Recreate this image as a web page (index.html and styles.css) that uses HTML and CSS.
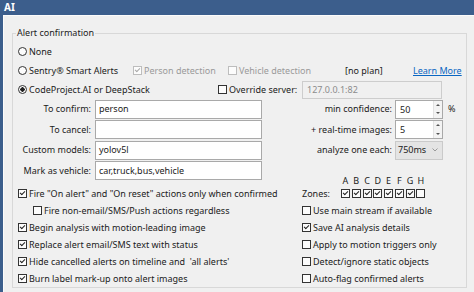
FILE: index.html
```html
<!DOCTYPE html>
<html lang="en">
<head>
    <meta charset="UTF-8">
    <meta name="viewport" content="width=device-width, initial-scale=1.0">
    <title>AI</title>
    <link rel="stylesheet" href="styles.css">
</head>
<body>
    <!-- Title bar -->
    <div class="titlebar">AI</div>

    <div class="window">
        <div class="edge"></div>
        <div class="content">
            <fieldset class="group">
                <legend>Alert confirmation</legend>

                <div class="row">
                    <label class="opt"><span class="radio"></span>None</label>
                </div>

                <div class="row sentry-row">
                    <label class="opt"><span class="radio"></span>Sentry® Smart Alerts</label>
                    <label class="opt disabled"><span class="cb on"></span>Person detection</label>
                    <label class="opt disabled"><span class="cb"></span>Vehicle detection</label>
                    <span class="plan">[no plan]</span>
                    <a href="#" class="link">Learn More</a>
                </div>

                <div class="row server-row">
                    <label class="opt"><span class="radio on"></span>CodeProject.AI or DeepStack</label>
                    <label class="opt"><span class="cb"></span>Override server:</label>
                    <div class="field disabled">127.0.0.1:82</div>
                </div>

                <!-- Object settings -->
                <div class="settings">
                    <span class="label">To confirm:</span>
                    <div class="field">person</div>
                    <span class="label right">min confidence:</span>
                    <div class="spin">
                        <span class="spin-value">50</span>
                        <span class="spin-btns"><i class="up"></i><i class="down"></i></span>
                    </div>
                    <span class="unit">%</span>

                    <span class="label">To cancel:</span>
                    <div class="field"></div>
                    <span class="label right">+ real-time images:</span>
                    <div class="spin">
                        <span class="spin-value">5</span>
                        <span class="spin-btns"><i class="up"></i><i class="down"></i></span>
                    </div>
                    <span class="unit"></span>

                    <span class="label">Custom models:</span>
                    <div class="field">yolov5l</div>
                    <span class="label right">analyze one each:</span>
                    <div class="select">
                        <span>750ms</span>
                        <svg class="chevron" width="6" height="4" viewBox="0 0 6 4"><polyline points="0.5,0.5 3,3 5.5,0.5" /></svg>
                    </div>
                    <span class="unit"></span>

                    <span class="label">Mark as vehicle:</span>
                    <div class="field">car,truck,bus,vehicle</div>
                </div>

                <!-- Options -->
                <div class="checks">
                    <div class="check-col">
                        <label class="opt"><span class="cb on"></span>Fire "On alert" and "On reset" actions only when confirmed</label>
                        <label class="opt indent"><span class="cb"></span>Fire non-email/SMS/Push actions regardless</label>
                        <label class="opt"><span class="cb on"></span>Begin analysis with motion-leading image</label>
                        <label class="opt"><span class="cb on"></span>Replace alert email/SMS text with status</label>
                        <label class="opt"><span class="cb on"></span>Hide cancelled alerts on timeline and&nbsp; 'all alerts'</label>
                        <label class="opt"><span class="cb on"></span>Burn label mark-up onto alert images</label>
                    </div>
                    <div class="check-col">
                        <div class="zones">
                            <span class="zones-label">Zones:</span>
                            <div class="zone-grid">
                                <span>A</span><span>B</span><span>C</span><span>D</span>
                                <span>E</span><span>F</span><span>G</span><span>H</span>
                                <span class="cb on"></span><span class="cb on"></span>
                                <span class="cb on"></span><span class="cb on"></span>
                                <span class="cb on"></span><span class="cb on"></span>
                                <span class="cb on"></span><span class="cb"></span>
                            </div>
                        </div>
                        <label class="opt"><span class="cb"></span>Use main stream if available</label>
                        <label class="opt"><span class="cb on"></span>Save AI analysis details</label>
                        <label class="opt"><span class="cb"></span>Apply to motion triggers only</label>
                        <label class="opt"><span class="cb"></span>Detect/ignore static objects</label>
                        <label class="opt"><span class="cb"></span>Auto-flag confirmed alerts</label>
                    </div>
                </div>
            </fieldset>
        </div>
    </div>
</body>
</html>
```

FILE: styles.css
```css
:root {
    --title: #3c5e8c;
    --bg: #f0f0f0;
    --text: #1b1b1b;
    --muted: #9a9a9a;
    --box: #333;
}

* {
    margin: 0;
    padding: 0;
    box-sizing: border-box;
}

html,
body {
    overflow: hidden;
}

body {
    width: 474px;
    height: 292px;
    font-family: "Noto Sans", "DejaVu Sans", sans-serif;
    font-size: 9px;
    line-height: 12px;
    color: var(--text);
    background-color: var(--bg);
}

.titlebar {
    height: 15px;
    padding-left: 4px;
    background-color: var(--title);
    color: #fff;
    font-weight: bold;
    font-size: 10px;
    line-height: 15px;
}

.window {
    display: flex;
    height: 277px;
}

.edge {
    width: 3px;
    background-color: var(--title);
}

.content {
    flex: 1;
    padding: 11px 7px 0 8px;
    background-color: var(--bg);
    border-top: 1px solid #fbfbfb;
    border-left: 1px solid #fbfbfb;
}

.group {
    border: 1px solid #d8d8d8;
    padding: 3px 0 0 5px;
    min-width: 0;
}

.group legend {
    margin-left: -2px;
    padding: 0 1px;
    line-height: 12px;
}

.row {
    display: flex;
    align-items: center;
    height: 19px;
}

.opt {
    display: flex;
    align-items: center;
    gap: 2px;
    white-space: nowrap;
}

.opt.disabled {
    color: var(--muted);
}

/* radio + checkbox */
.radio,
.cb {
    flex: none;
    width: 9px;
    height: 9px;
    border: 1px solid var(--box);
    background-color: #fcfcfc;
}

.radio {
    border-radius: 50%;
}

.radio.on {
    background: radial-gradient(circle, #222 0 2px, #fcfcfc 2.4px);
}

.cb {
    position: relative;
    display: inline-block;
}

.cb.on::after {
    content: "";
    position: absolute;
    left: 1px;
    top: 1px;
    box-sizing: content-box;
    width: 4px;
    height: 2px;
    border-left: 1px solid #222;
    border-bottom: 1px solid #222;
    transform: rotate(-45deg);
}

.disabled .cb {
    border-color: #bdbdbd;
}

.disabled .cb.on::after {
    border-color: #a8a8a8;
}

.sentry-row {
    display: grid;
    grid-template-columns: 115px 95px 117px 68px auto;
}

.link {
    color: #0a66c2;
    text-decoration: underline;
}

.server-row {
    display: grid;
    grid-template-columns: 200px 84px 140px;
}

/* text boxes */
.field {
    display: flex;
    align-items: center;
    height: 19px;
    padding: 0 3px;
    background-color: #fff;
    border: 1px solid #a9a9a9;
    white-space: nowrap;
}

.field.disabled {
    height: 18px;
    padding: 0 4px;
    background-color: var(--bg);
    border-color: #cdcdcd;
    color: #8c8c8c;
}

.settings {
    display: grid;
    grid-template-columns: 77px 167px 133px 53px auto;
    grid-auto-rows: 19px;
    row-gap: 1.5px;
    margin-top: 0.5px;
    align-items: center;
}

.label {
    text-align: right;
    padding-right: 4px;
    white-space: nowrap;
}

.label.right {
    padding-right: 3px;
}

.spin {
    display: flex;
    width: 48px;
    height: 19px;
    background-color: #fff;
    border: 1px solid #a9a9a9;
}

.spin-value {
    flex: 1;
    padding-left: 4px;
    line-height: 17px;
}

.spin-btns {
    display: flex;
    flex-direction: column;
    width: 9px;
    background-color: #f3f3f3;
    border-left: 1px solid #e2e2e2;
}

.spin-btns i {
    flex: 1;
    display: flex;
    align-items: center;
    justify-content: center;
}

.spin-btns i::before {
    content: "";
    border-left: 2px solid transparent;
    border-right: 2px solid transparent;
}

.spin-btns .up::before {
    border-bottom: 2.5px solid #555;
}

.spin-btns .down::before {
    border-top: 2.5px solid #555;
}

.select {
    display: flex;
    align-items: center;
    justify-content: space-between;
    width: 48px;
    height: 19px;
    padding: 0 4px 0 2px;
    background-color: #e4e4e4;
    border: 1px solid #cacaca;
}

.chevron {
    fill: none;
    stroke: #9a9a9a;
    stroke-width: 1;
}

/* check options */
.checks {
    display: grid;
    grid-template-columns: 284px 1fr;
    margin-top: 5px;
}

.check-col {
    display: flex;
    flex-direction: column;
}

.check-col .opt {
    height: 17px;
}

.indent {
    padding-left: 15px;
}

.zones {
    display: flex;
    align-items: flex-end;
    margin-top: -9px;
}

.zones-label {
    width: 39px;
    line-height: 17px;
}

.zone-grid {
    display: grid;
    grid-template-columns: repeat(8, 10.75px);
    grid-template-rows: 9px 17px;
    align-items: center;
}

.zone-grid span:not(.cb) {
    width: 9px;
    text-align: center;
    line-height: 9px;
}
```
